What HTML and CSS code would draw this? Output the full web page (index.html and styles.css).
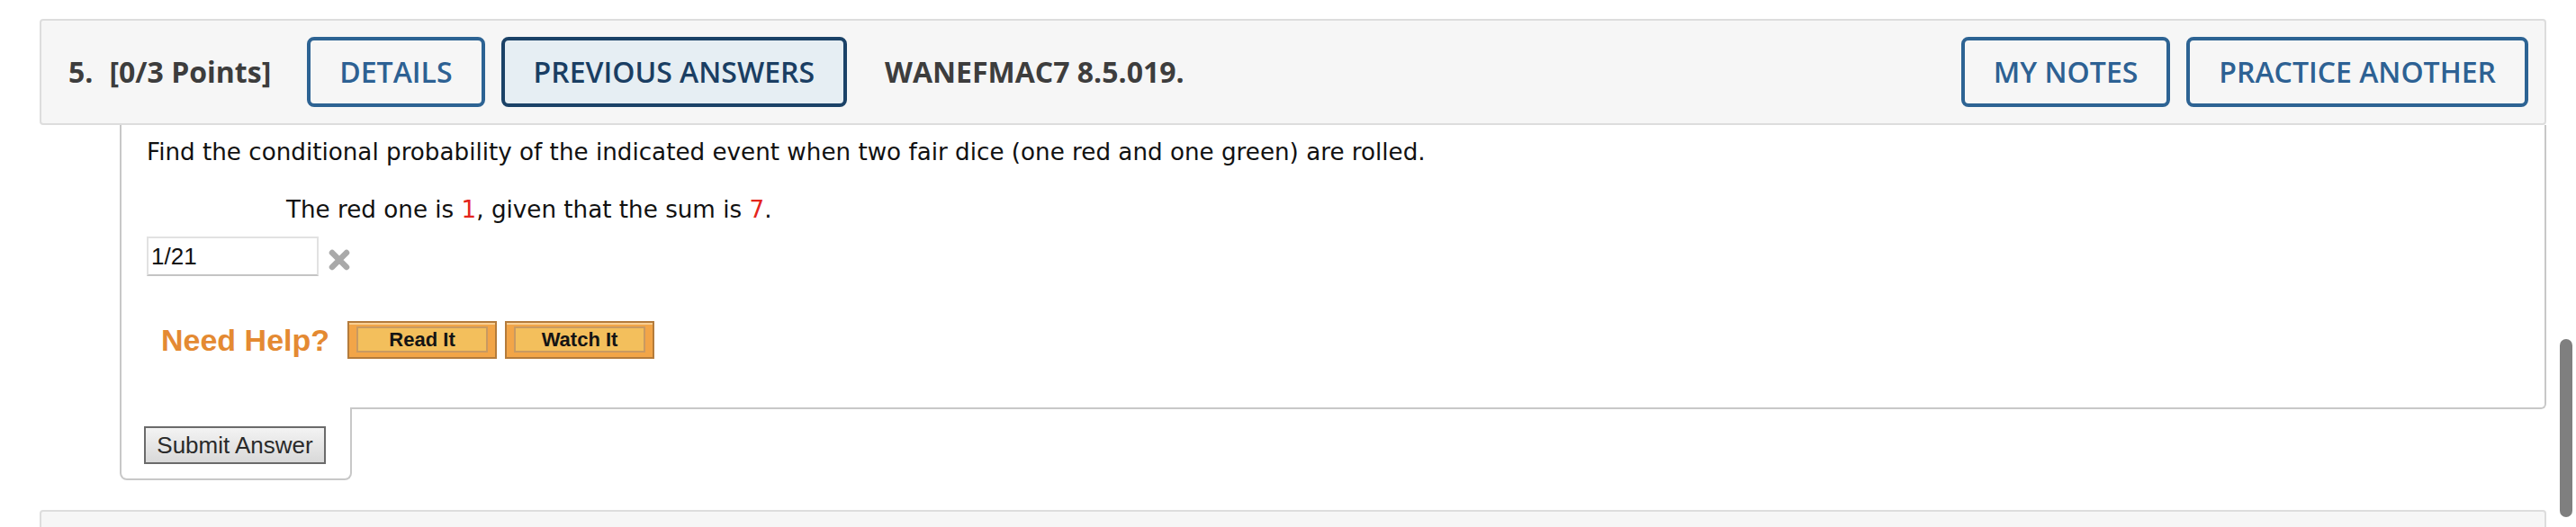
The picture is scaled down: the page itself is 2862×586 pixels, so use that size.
FILE: index.html
```html
<!DOCTYPE html>
<html lang="en">
<head>
<meta charset="utf-8">
<title>Question 5</title>
<link rel="stylesheet" href="styles.css">
</head>
<body>
<div class="page">
  <div class="qhead">
    <span class="qnum">5.</span>
    <span class="qpts">[0/3 Points]</span>
    <button class="hbtn hbtn-details">DETAILS</button>
    <button class="hbtn hbtn-active">PREVIOUS ANSWERS</button>
    <span class="qid">WANEFMAC7 8.5.019.</span>
    <div class="hright">
      <button class="hbtn">MY NOTES</button>
      <button class="hbtn">PRACTICE ANOTHER</button>
    </div>
  </div>
  <div class="qbody">
    <p class="qtext">Find the conditional probability of the indicated event when two fair dice (one red and one green) are rolled.</p>
    <p class="qevent">The red one is <span class="red">1</span>, given that the sum is <span class="red">7</span>.</p>
    <div class="answer">
      <input class="ans-input" type="text" value="1/21">
      <svg class="xmark" width="28" height="26" viewBox="0 0 28 26" aria-hidden="true">
        <path d="M6 5 L22 21 M22 5 L6 21" stroke="#a9a9a9" stroke-width="6.5" stroke-linecap="round" fill="none"/>
      </svg>
    </div>
    <div class="help">
      <span class="help-label">Need Help?</span>
      <button class="help-btn"><span class="help-inner">Read It</span></button>
      <button class="help-btn"><span class="help-inner">Watch It</span></button>
    </div>
  </div>
  <div class="submit-tab">
    <button class="submit">Submit Answer</button>
  </div>
  <div class="qhead qhead-next"></div>
</div>
<div class="scrollbar"></div>
</body>
</html>
```

FILE: styles.css
```css
html, body {
  margin: 0;
  padding: 0;
  background: #ffffff;
  overflow: hidden;
}

.page {
  padding: 21px 33px 0 44px;
}

.qhead {
  display: flex;
  align-items: center;
  background: #f6f6f6;
  border: 2px solid #dddddd;
  border-radius: 4px;
  padding: 18px 18px 18px 30px;
  font-family: "Open Sans", "Liberation Sans", sans-serif;
  color: #3d3d3d;
}

.qnum, .qpts, .qid {
  font-size: 32px;
  font-weight: 700;
  line-height: 44px;
}

.qnum {
  margin-right: 18px;
}

.qpts {
  margin-right: 40px;
}

.qid {
  margin-left: 42px;
}

.hbtn {
  font-family: "Open Sans", "Liberation Sans", sans-serif;
  font-size: 32px;
  font-weight: 600;
  line-height: 44px;
  color: #2d6193;
  background: transparent;
  border: 4px solid #2d6393;
  border-radius: 8px;
  padding: 13px 32px;
  margin: 0;
}

.hbtn-active {
  margin-left: 18px;
  background: #e6eef3;
  border-color: #1b4267;
  color: #1a3e63;
}

.hright {
  margin-left: auto;
  display: flex;
  gap: 18px;
}

.qbody {
  margin-left: 89px;
  border: 2px solid #c8c8c8;
  border-top: none;
  border-bottom-right-radius: 6px;
  padding: 15px 30px 54px 28px;
  font-family: "DejaVu Sans", Verdana, sans-serif;
  color: #111111;
}

.qtext {
  margin: 0;
  font-size: 26.2px;
  line-height: 30px;
}

.qevent {
  margin: 34px 0 0 0;
  padding-left: 155px;
  font-size: 26.2px;
  line-height: 30px;
}

.red {
  color: #e4251c;
}

.answer {
  display: flex;
  align-items: center;
  margin-top: 15px;
}

.ans-input {
  box-sizing: border-box;
  width: 191px;
  height: 44px;
  margin: 0;
  padding: 0 3px;
  border: 2px solid #e2e2e2;
  border-bottom-color: #c4c4c4;
  font-family: "Liberation Sans", Arial, sans-serif;
  font-size: 26px;
  color: #111111;
  background: #ffffff;
}

.xmark {
  margin-left: 9px;
  margin-top: 8px;
}

.help {
  display: flex;
  align-items: center;
  margin: 50px 0 0 16px;
}

.help-label {
  font-family: "Liberation Sans", Arial, sans-serif;
  font-size: 34px;
  font-weight: 700;
  color: #e48a32;
  margin-right: 20px;
}

.help-btn {
  box-sizing: border-box;
  display: flex;
  width: 166px;
  height: 42px;
  margin: 0 9px 0 0;
  padding: 4px 8px 5px;
  border: 2px solid #b47b3b;
  background: #f2a548;
  box-shadow: inset 0 2px 0 #f8cf94;
}

.help-inner {
  flex: 1;
  display: flex;
  align-items: center;
  justify-content: center;
  border: 2px solid #c99a61;
  background: #f3bf5c;
  font-family: "Liberation Sans", Arial, sans-serif;
  font-size: 22px;
  font-weight: 700;
  color: #141414;
}

.submit-tab {
  box-sizing: border-box;
  position: relative;
  width: 258px;
  margin: -2px 0 0 89px;
  padding: 21px 0 16px 25px;
  background: #ffffff;
  border: 2px solid #c8c8c8;
  border-top: none;
  border-radius: 0 0 8px 8px;
}

.submit {
  display: block;
  box-sizing: border-box;
  width: 202px;
  height: 42px;
  margin: 0;
  padding: 0;
  border: 2px solid #6b6b6b;
  background: linear-gradient(#f3f3f3, #d9d9d9);
  font-family: "Liberation Sans", Arial, sans-serif;
  font-size: 26px;
  color: #2a2a2a;
}

.qhead-next {
  margin-top: 33px;
  height: 60px;
  padding: 0;
}

.scrollbar {
  position: fixed;
  left: 2844px;
  top: 377px;
  width: 14px;
  height: 198px;
  border-radius: 7px;
  background: #7f7f7f;
}
```
